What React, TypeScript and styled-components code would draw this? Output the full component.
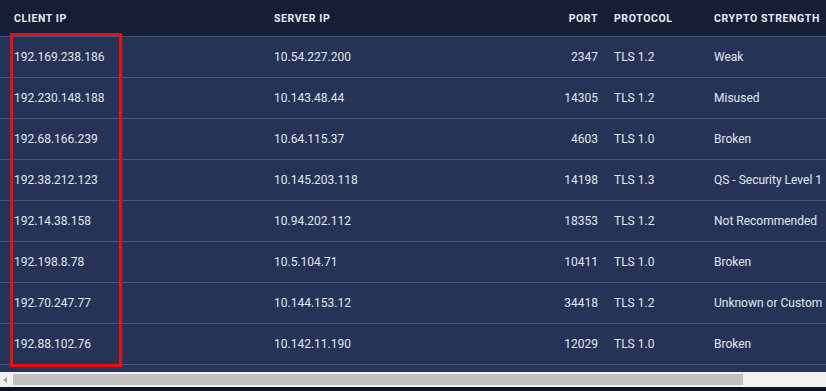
import React from "react";
import styled, { createGlobalStyle } from "styled-components";

type Connection = {
    client: string;
    server: string;
    port: number;
    protocol: string;
    strength: string;
};

const data: Connection[] = [
    { client: "192.169.238.186", server: "10.54.227.200", port: 2347, protocol: "TLS 1.2", strength: "Weak" },
    { client: "192.230.148.188", server: "10.143.48.44", port: 14305, protocol: "TLS 1.2", strength: "Misused" },
    { client: "192.68.166.239", server: "10.64.115.37", port: 4603, protocol: "TLS 1.0", strength: "Broken" },
    { client: "192.38.212.123", server: "10.145.203.118", port: 14198, protocol: "TLS 1.3", strength: "QS - Security Level 1" },
    { client: "192.14.38.158", server: "10.94.202.112", port: 18353, protocol: "TLS 1.2", strength: "Not Recommended" },
    { client: "192.198.8.78", server: "10.5.104.71", port: 10411, protocol: "TLS 1.0", strength: "Broken" },
    { client: "192.70.247.77", server: "10.144.153.12", port: 34418, protocol: "TLS 1.2", strength: "Unknown or Custom" },
    { client: "192.88.102.76", server: "10.142.11.190", port: 12029, protocol: "TLS 1.0", strength: "Broken" },
];

const GlobalStyle = createGlobalStyle`
    html, body {
        margin: 0;
        padding: 0;
        background: #0b1426;
        font-family: Roboto, "Liberation Sans", sans-serif;
    }
`;

export default function App() {
    return (
        <>
            <GlobalStyle />
            <Page>
                <Viewport>
                    <Table>
                        <HeaderRow>
                            <HeadCell>Client IP</HeadCell>
                            <HeadCell>Server IP</HeadCell>
                            <HeadCell $right>Port</HeadCell>
                            <HeadCell>Protocol</HeadCell>
                            <HeadCell>Crypto Strength</HeadCell>
                        </HeaderRow>
                        {data.map((row) => (
                            <Row key={row.client}>
                                <Cell>{row.client}</Cell>
                                <Cell>{row.server}</Cell>
                                <Cell $right>{row.port}</Cell>
                                <Cell>{row.protocol}</Cell>
                                <Cell>{row.strength}</Cell>
                            </Row>
                        ))}
                        <Highlight />
                    </Table>
                </Viewport>
                {/* browser hides native scrollbars in the screenshot, so draw one */}
                <ScrollTrack>
                    <ArrowButton />
                    <Thumb />
                </ScrollTrack>
            </Page>
        </>
    );
}

const Page = styled.div`
    width: 826px;
    height: 391px;
    background: #0b1426;
`;

const Viewport = styled.div`
    width: 826px;
    overflow: hidden;
    background: #253356;
`;

const Table = styled.div`
    position: relative;
    width: 915px;
    padding-bottom: 7px;
`;

const columns = "260px 260px 80px 100px 1fr";

const HeaderRow = styled.div`
    display: grid;
    grid-template-columns: ${columns};
    align-items: center;
    height: 36px;
    background: #151e35;
    border-bottom: 1px solid #46557a;
`;

const HeadCell = styled.div<{ $right?: boolean }>`
    padding: ${(p) => (p.$right ? "0 2px 0 0" : "0 0 0 14px")};
    text-align: ${(p) => (p.$right ? "right" : "left")};
    color: #e8ebf2;
    font-size: 10.5px;
    font-weight: 700;
    letter-spacing: 0.6px;
    text-transform: uppercase;
    white-space: nowrap;
`;

const Row = styled.div`
    display: grid;
    grid-template-columns: ${columns};
    align-items: center;
    height: 40px;
    border-bottom: 1px solid #46557a;
`;

const Cell = styled.div<{ $right?: boolean }>`
    padding: ${(p) => (p.$right ? "0 2px 0 0" : "0 0 0 14px")};
    text-align: ${(p) => (p.$right ? "right" : "left")};
    color: #e3e7ef;
    font-size: 12px;
    white-space: nowrap;
`;

const Highlight = styled.div`
    position: absolute;
    left: 10px;
    top: 33px;
    width: 106px;
    height: 328px;
    border: 3px solid #ee0d0d;
    pointer-events: none;
`;

const ScrollTrack = styled.div`
    display: flex;
    align-items: center;
    height: 15px;
    background: #f1f1f1;
`;

const ArrowButton = styled.div`
    width: 13px;
    height: 15px;
    display: flex;
    align-items: center;
    justify-content: center;

    &::before {
        content: "";
        width: 0;
        height: 0;
        border-top: 3px solid transparent;
        border-bottom: 3px solid transparent;
        border-right: 4px solid #a3a3a3;
        margin-right: 3px;
    }
`;

const Thumb = styled.div`
    width: 730px;
    height: 11px;
    background: #c1c1c1;
`;
